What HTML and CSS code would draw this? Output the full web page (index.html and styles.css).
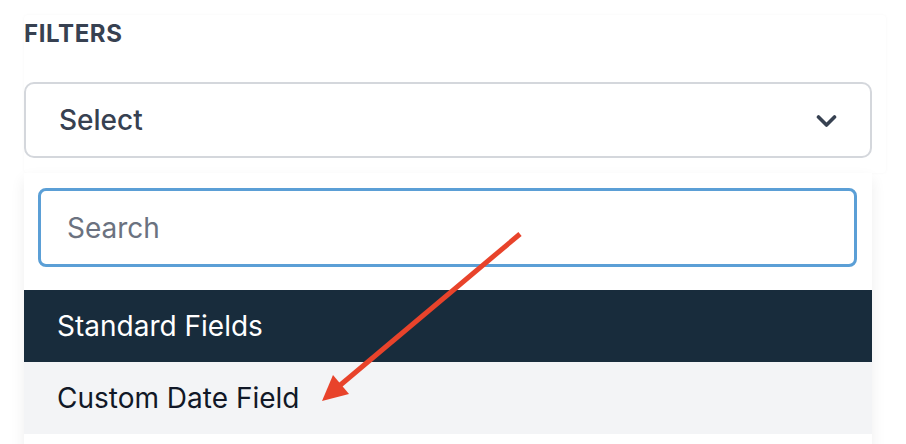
FILE: index.html
```html
<!DOCTYPE html>
<html>
<head>
<meta charset="utf-8">
<link rel="stylesheet" href="styles.css">
</head>
<body>
<div class="page">
  <div class="card">
    <div class="title">FILTERS</div>
    <div class="select">
      <span class="select-label">Select</span>
      <svg class="chev" width="21" height="14" viewBox="0 0 21 14"><path d="M2.5 3 L10.5 11 L18.5 3" fill="none" stroke="#374151" stroke-width="3.6" stroke-linecap="round" stroke-linejoin="round"/></svg>
    </div>
  </div>
  <div class="panel">
    <div class="search-wrap">
      <div class="search">Search</div>
    </div>
    <div class="opt opt-group">Standard Fields</div>
    <div class="opt opt-hover">Custom Date Field</div>
  </div>
  <svg class="arrow" width="906" height="444" viewBox="0 0 906 444">
    <line x1="520" y1="234" x2="338" y2="387" stroke="#e8432b" stroke-width="5"/>
    <polygon points="322,401 333,375 349,394" fill="#e8432b"/>
  </svg>
</div>
</body>
</html>
```
FILE: styles.css
```css
html, body {
  margin: 0;
  padding: 0;
  background: #ffffff;
}
body {
  font-family: Inter, "Noto Sans", sans-serif;
  width: 906px;
  height: 444px;
  overflow: hidden;
}
.page {
  position: relative;
  padding: 15px 0 0 24px;
  width: 848px;
}
.card {
  padding: 4px 0 15px 0;
  box-shadow: 0 0 3px rgba(0, 0, 0, 0.04);
  border-radius: 4px;
  width: 862px;
}
.title {
  font-size: 24px;
  line-height: 30px;
  font-weight: 700;
  color: #374151;
  letter-spacing: 0.6px;
}
.select {
  margin-top: 33px;
  width: 848px;
  height: 76px;
  box-sizing: border-box;
  border: 2px solid #d4d7dc;
  border-radius: 10px;
  display: flex;
  align-items: center;
  justify-content: space-between;
  padding: 0 33px 0 33px;
  background: #fff;
}
.select-label {
  font-size: 28px;
  font-weight: 500;
  color: #374151;
}
.chev {
  display: block;
  margin-top: 1px;
}
.panel {
  width: 848px;
  height: 280px;
  background: #fff;
  box-shadow: 0 6px 14px rgba(0, 0, 0, 0.07);
}
.search-wrap {
  padding: 15px 15px 23px 14px;
}
.search {
  height: 79px;
  box-sizing: border-box;
  border: 3px solid #5b9fd6;
  border-radius: 8px;
  display: flex;
  align-items: center;
  padding-left: 26px;
  font-size: 28px;
  color: #6b7280;
}
.opt {
  height: 72px;
  display: flex;
  align-items: center;
  padding-left: 33px;
  font-size: 28px;
}
.opt-group {
  background: #182c3c;
  color: #ffffff;
}
.opt-hover {
  background: #f3f4f6;
  color: #111827;
}
.arrow {
  position: absolute;
  left: 0;
  top: 0;
  pointer-events: none;
}
```
